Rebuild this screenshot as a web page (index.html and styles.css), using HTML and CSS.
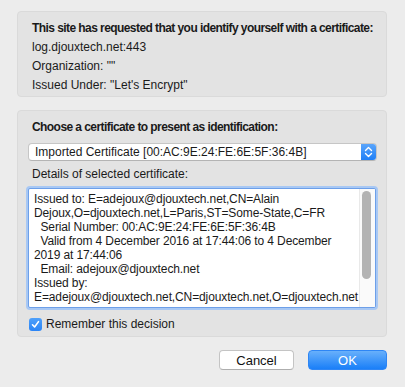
FILE: index.html
```html
<!DOCTYPE html>
<html lang="en">
<head>
  <meta charset="UTF-8" />
  <title>Certificate</title>
  <link rel="stylesheet" href="styles.css">
</head>
<body>
  <div class="dialog">
    <section class="group site-info">
      <div class="heading">This site has requested that you identify yourself with a certificate:</div>
      <div class="line">log.djouxtech.net:443</div>
      <div class="line">Organization: ""</div>
      <div class="line">Issued Under: "Let's Encrypt"</div>
    </section>

    <section class="group chooser">
      <div class="heading">Choose a certificate to present as identification:</div>
      <div class="popup">
        <span class="popup-label">Imported Certificate [00:AC:9E:24:FE:6E:5F:36:4B]</span>
        <span class="stepper">
          <svg width="9" height="12" viewBox="0 0 9 12">
            <path d="M1.5 4.5 L4.5 1.5 L7.5 4.5 M1.5 7.5 L4.5 10.5 L7.5 7.5" fill="none" stroke="#fff" stroke-width="1.4" stroke-linecap="round" stroke-linejoin="round"/>
          </svg>
        </span>
      </div>
      <div class="label">Details of selected certificate:</div>
      <div class="details">
        <div class="details-text">Issued to: E=adejoux@djouxtech.net,CN=Alain Dejoux,O=djouxtech.net,L=Paris,ST=Some-State,C=FR
  Serial Number: 00:AC:9E:24:FE:6E:5F:36:4B
  Valid from 4 December 2016 at 17:44:06 to 4 December 2019 at 17:44:06
  Email: adejoux@djouxtech.net
Issued by: E=adejoux@djouxtech.net,CN=djouxtech.net,O=djouxtech.net</div>
        <div class="scrollbar"><div class="thumb"></div></div>
      </div>
      <label class="remember">
        <span class="checkbox">
          <svg width="9" height="9" viewBox="0 0 9 9">
            <path d="M1.5 4.8 L3.6 7 L7.5 1.6" fill="none" stroke="#fff" stroke-width="1.6" stroke-linecap="round" stroke-linejoin="round"/>
          </svg>
        </span>
        Remember this decision
      </label>
    </section>

    <div class="actions">
      <button class="btn">Cancel</button>
      <button class="btn primary">OK</button>
    </div>
  </div>
</body>
</html>
```

FILE: styles.css
```css
html, body {
  margin: 0;
  padding: 0;
  background: #ececec;
  font-family: "Liberation Sans", Arial, sans-serif;
  font-size: 12px;
  color: #1a1a1a;
}

.dialog {
  width: 370px;
  padding: 11px 0 0 17px;
  display: flex;
  flex-direction: column;
}

.group {
  background: #e3e3e3;
  border: 1px solid #dadada;
  border-radius: 4px;
  box-sizing: border-box;
}

.site-info {
  height: 86px;
  padding: 9px 0 0 14px;
}

.site-info .line {
  margin-top: 5px;
  line-height: 14px;
}

.heading {
  font-weight: bold;
  line-height: 14px;
  white-space: nowrap;
  letter-spacing: -0.57px;
}

.chooser {
  margin-top: 13px;
  height: 227px;
  padding: 9px 0 0 10px;
}

.chooser .heading {
  padding-left: 4px;
}

.popup {
  margin-top: 9px;
  width: 349px;
  height: 18px;
  box-sizing: border-box;
  display: flex;
  align-items: stretch;
  background: #fff;
  border: 1px solid #c6c6c6;
  border-bottom-color: #b4b4b4;
  border-radius: 4px;
  overflow: hidden;
}

.popup-label {
  flex: 1;
  padding-left: 6px;
  line-height: 16px;
}

.stepper {
  width: 15px;
  display: flex;
  align-items: center;
  justify-content: center;
  background: linear-gradient(#5aa5fb, #1f7ff7);
}

.label {
  margin-top: 6px;
  padding-left: 4px;
  line-height: 14px;
}

.details {
  margin-top: 7px;
  width: 348px;
  height: 120px;
  box-sizing: border-box;
  display: flex;
  background: #fff;
  border: 1px solid #6d9fe8;
  box-shadow: 0 0 0 2px #a8c8f4;
  border-radius: 2px;
  overflow: hidden;
}

.details-text {
  flex: 1;
  padding: 3px 0 0 5px;
  line-height: 14px;
  letter-spacing: -0.12px;
  white-space: pre-wrap;
  overflow: hidden;
}

.scrollbar {
  width: 16px;
  background: #fafafa;
  border-left: 1px solid #e9e9e9;
  padding: 2px 0 0 2px;
  box-sizing: border-box;
}

.thumb {
  width: 9px;
  height: 88px;
  border-radius: 5px;
  background: #b3b3b3;
}

.remember {
  margin-top: 9px;
  display: flex;
  align-items: center;
  gap: 4px;
  padding-left: 1px;
  line-height: 14px;
}

.checkbox {
  width: 13px;
  height: 13px;
  border-radius: 3px;
  background: linear-gradient(#4fa0fa, #2a84f6);
  display: flex;
  align-items: center;
  justify-content: center;
}

.actions {
  margin-top: 13px;
  display: flex;
  justify-content: flex-end;
  gap: 14px;
}

.btn {
  font: inherit;
  font-size: 13px;
  height: 20px;
  width: 75px;
  padding: 0;
  border: 1px solid #c4c4c4;
  border-bottom-color: #aeaeae;
  border-radius: 4px;
  background: #fff;
  color: #111;
}

.btn.primary {
  width: 79px;
  border-color: #2e86f5;
  background: linear-gradient(#68b0fb, #1a7ff8);
  color: #fff;
}
```
